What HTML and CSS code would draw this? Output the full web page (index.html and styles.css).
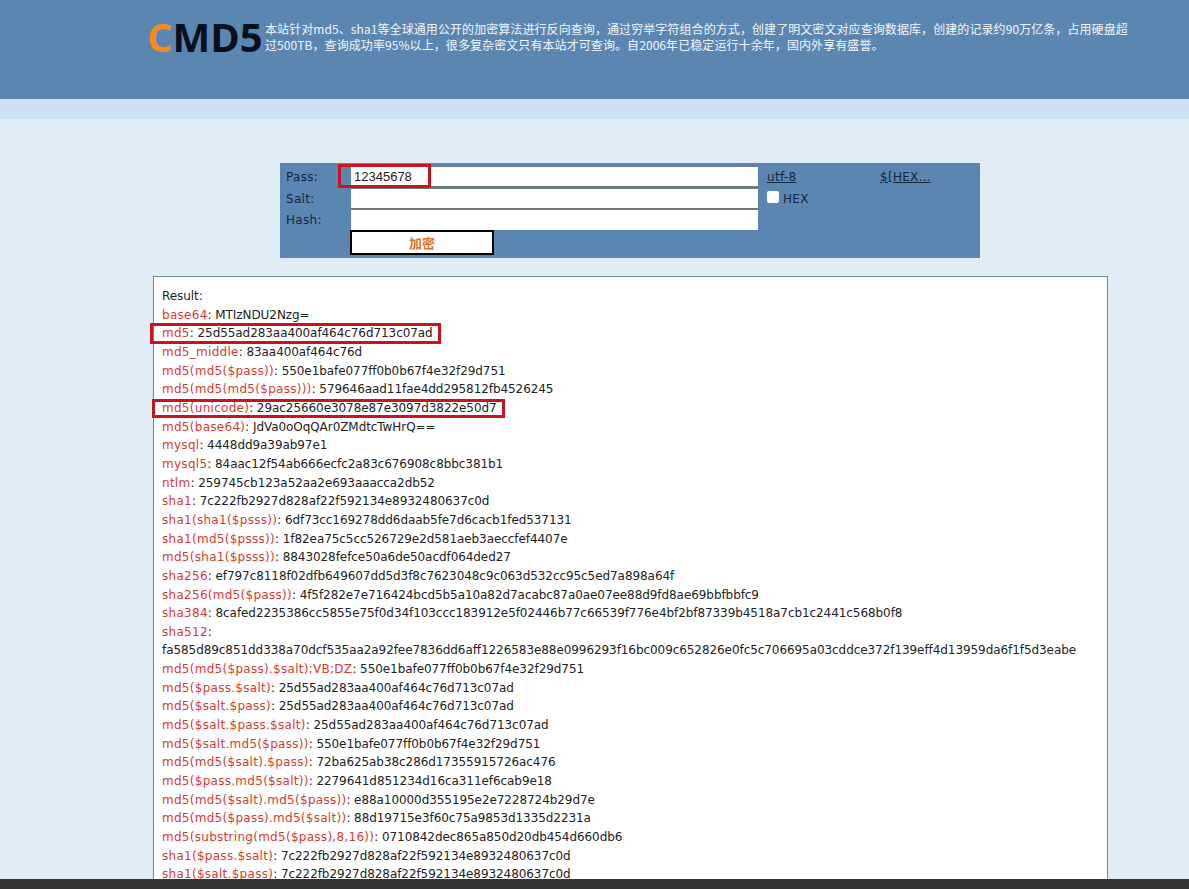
FILE: index.html
```html
<!DOCTYPE html>
<html lang="zh-CN">
<head>
  <meta charset="UTF-8" />
  <title>CMD5</title>
  <link rel="stylesheet" href="styles.css">
</head>
<body>
  <header class="top">
    <div class="logo"><span class="logo-c">C</span>MD5</div>
    <p class="intro">本站针对md5、sha1等全球通用公开的加密算法进行反向查询，通过穷举字符组合的方式，创建了明文密文对应查询数据库，创建的记录约90万亿条，占用硬盘超过500TB，查询成功率95%以上，很多复杂密文只有本站才可查询。自2006年已稳定运行十余年，国内外享有盛誉。</p>
  </header>
  <div class="band"></div>
  <main class="content">
    <form class="panel">
      <label class="field-label">Pass:</label>
      <div class="input-wrap">
        <input class="field field-first" type="text" value="12345678" />
        <span class="pass-mark"></span>
      </div>
      <a class="link" href="#">utf-8</a>
      <a class="link" href="#">$[HEX...</a>

      <label class="field-label">Salt:</label>
      <div class="input-wrap"><input class="field" type="text" /></div>
      <label class="hex"><span class="box"></span>HEX</label>
      <span></span>

      <label class="field-label">Hash:</label>
      <div class="input-wrap"><input class="field field-last" type="text" /></div>
      <span></span>
      <span></span>

      <span></span>
      <div class="input-wrap"><button class="submit" type="button">加密</button></div>
    </form>

    <section class="result">
      <div>Result:</div>
      <div><b>base64</b>: MTIzNDU2Nzg=</div>
      <div><span class="hit hit-md5"><b>md5</b>: 25d55ad283aa400af464c76d713c07ad</span></div>
      <div><b>md5_middle</b>: 83aa400af464c76d</div>
      <div><b>md5(md5($pass))</b>: 550e1bafe077ff0b0b67f4e32f29d751</div>
      <div><b>md5(md5(md5($pass)))</b>: 579646aad11fae4dd295812fb4526245</div>
      <div><span class="hit hit-unicode"><b>md5(unicode)</b>: 29ac25660e3078e87e3097d3822e50d7</span></div>
      <div><b>md5(base64)</b>: JdVa0oOqQAr0ZMdtcTwHrQ==</div>
      <div><b>mysql</b>: 4448dd9a39ab97e1</div>
      <div><b>mysql5</b>: 84aac12f54ab666ecfc2a83c676908c8bbc381b1</div>
      <div><b>ntlm</b>: 259745cb123a52aa2e693aaacca2db52</div>
      <div><b>sha1</b>: 7c222fb2927d828af22f592134e8932480637c0d</div>
      <div><b>sha1(sha1($psss))</b>: 6df73cc169278dd6daab5fe7d6cacb1fed537131</div>
      <div><b>sha1(md5($psss))</b>: 1f82ea75c5cc526729e2d581aeb3aeccfef4407e</div>
      <div><b>md5(sha1($psss))</b>: 8843028fefce50a6de50acdf064ded27</div>
      <div><b>sha256</b>: ef797c8118f02dfb649607dd5d3f8c7623048c9c063d532cc95c5ed7a898a64f</div>
      <div><b>sha256(md5($pass))</b>: 4f5f282e7e716424bcd5b5a10a82d7acabc87a0ae07ee88d9fd8ae69bbfbbfc9</div>
      <div><b>sha384</b>: 8cafed2235386cc5855e75f0d34f103ccc183912e5f02446b77c66539f776e4bf2bf87339b4518a7cb1c2441c568b0f8</div>
      <div><b>sha512</b>:</div>
      <div>fa585d89c851dd338a70dcf535aa2a92fee7836dd6aff1226583e88e0996293f16bc009c652826e0fc5c706695a03cddce372f139eff4d13959da6f1f5d3eabe</div>
      <div><b>md5(md5($pass).$salt);VB;DZ</b>: 550e1bafe077ff0b0b67f4e32f29d751</div>
      <div><b>md5($pass.$salt)</b>: 25d55ad283aa400af464c76d713c07ad</div>
      <div><b>md5($salt.$pass)</b>: 25d55ad283aa400af464c76d713c07ad</div>
      <div><b>md5($salt.$pass.$salt)</b>: 25d55ad283aa400af464c76d713c07ad</div>
      <div><b>md5($salt.md5($pass))</b>: 550e1bafe077ff0b0b67f4e32f29d751</div>
      <div><b>md5(md5($salt).$pass)</b>: 72ba625ab38c286d17355915726ac476</div>
      <div><b>md5($pass.md5($salt))</b>: 2279641d851234d16ca311ef6cab9e18</div>
      <div><b>md5(md5($salt).md5($pass))</b>: e88a10000d355195e2e7228724b29d7e</div>
      <div><b>md5(md5($pass).md5($salt))</b>: 88d19715e3f60c75a9853d1335d2231a</div>
      <div><b>md5(substring(md5($pass),8,16))</b>: 0710842dec865a850d20db454d660db6</div>
      <div><b>sha1($pass.$salt)</b>: 7c222fb2927d828af22f592134e8932480637c0d</div>
      <div><b>sha1($salt.$pass)</b>: 7c222fb2927d828af22f592134e8932480637c0d</div>
    </section>
  </main>
  <div class="bottom-bar"></div>
</body>
</html>
```

FILE: styles.css
```css
* {
  box-sizing: border-box;
}
html, body {
  height: 100%;
}
body {
  margin: 0;
  display: flex;
  flex-direction: column;
  overflow: hidden;
  background: #e0edf6;
  font-family: "DejaVu Sans", Verdana, "Noto Sans CJK SC", sans-serif;
  font-size: 12px;
  color: #222;
}

/* Header */
.top {
  flex: none;
  height: 99px;
  padding: 18px 58px 0 147px;
  display: flex;
  align-items: flex-start;
  background: #5c86b2;
}
.logo {
  flex: none;
  width: 118px;
  font-family: "Open Sans", sans-serif;
  font-weight: 700;
  font-size: 40px;
  line-height: 38px;
  color: #0a0f1e;
}
.logo-c {
  color: #f58a1f;
}
.intro {
  margin: 3px 0 0;
  font-family: "Noto Sans CJK SC", sans-serif;
  font-size: 12px;
  line-height: 15.5px;
  letter-spacing: 0.08px;
  color: #f4f7fa;
}
.band {
  flex: none;
  height: 20px;
  background: #cfe0f0;
}

/* Content */
.content {
  flex: 1;
  min-height: 0;
  overflow: hidden;
  padding: 44px 81px 0 153px;
}

/* Form */
.panel {
  width: 700px;
  height: 95px;
  margin-left: 127px;
  padding: 3px 0 0 6px;
  display: grid;
  grid-template-columns: 65px 407px 113px 1fr;
  grid-template-rows: 22px 21px 21px 25px;
  background: #5c86b2;
  color: #13263f;
  letter-spacing: 0.3px;
}
.field-label {
  padding-top: 1px;
  line-height: 21px;
}
.input-wrap {
  position: relative;
  display: flex;
}
.field {
  width: 100%;
  height: 100%;
  margin: 0;
  padding: 0 3px;
  border: none;
  border-top: 1px solid #6f7a85;
  border-bottom: 1px solid #6f7a85;
  background: #fff;
  font-family: "Liberation Sans", Arial, sans-serif;
  font-size: 13px;
  color: #222;
}
.field-first {
  border-bottom-width: 2px;
}
.field-last {
  border-bottom: none;
}
.pass-mark {
  position: absolute;
  left: -13px;
  top: -2px;
  width: 93px;
  height: 24px;
  border: 3px solid #c8141c;
}
.link {
  margin-left: 9px;
  line-height: 22px;
  color: #13263f;
}
.hex {
  margin-left: 9px;
  padding-top: 1px;
  display: flex;
  align-items: center;
  line-height: 21px;
}
.box {
  width: 12px;
  height: 12px;
  margin-right: 4px;
  margin-bottom: 4px;
  border-radius: 2px;
  background: #fff;
}
.submit {
  width: 144px;
  height: 25px;
  margin-left: -1px;
  padding: 0;
  border: 2px solid #000;
  background: #fff;
  font-family: "Noto Sans CJK SC", sans-serif;
  font-size: 13px;
  font-weight: 700;
  color: #e0722c;
}

/* Result */
.result {
  width: 955px;
  height: 700px;
  margin-top: 18px;
  padding: 10px 8px 0;
  border: 1px solid #6c8a96;
  background: #fff;
  line-height: 18.66px;
  letter-spacing: -0.07px;
  white-space: nowrap;
}
.result b {
  font-weight: 400;
  letter-spacing: 0.28px;
  color: #d43c30;
}
.hit {
  display: inline-block;
  outline: 3px solid #c8141c;
}
.hit-md5 {
  margin-left: -11px;
  padding: 0 7px 0 11px;
  outline-offset: -2px;
}
.hit-unicode {
  margin-left: -10px;
  padding: 0 8px 0 10px;
  outline-offset: -3px;
}

.bottom-bar {
  flex: none;
  height: 10px;
  background: #333;
}
```
